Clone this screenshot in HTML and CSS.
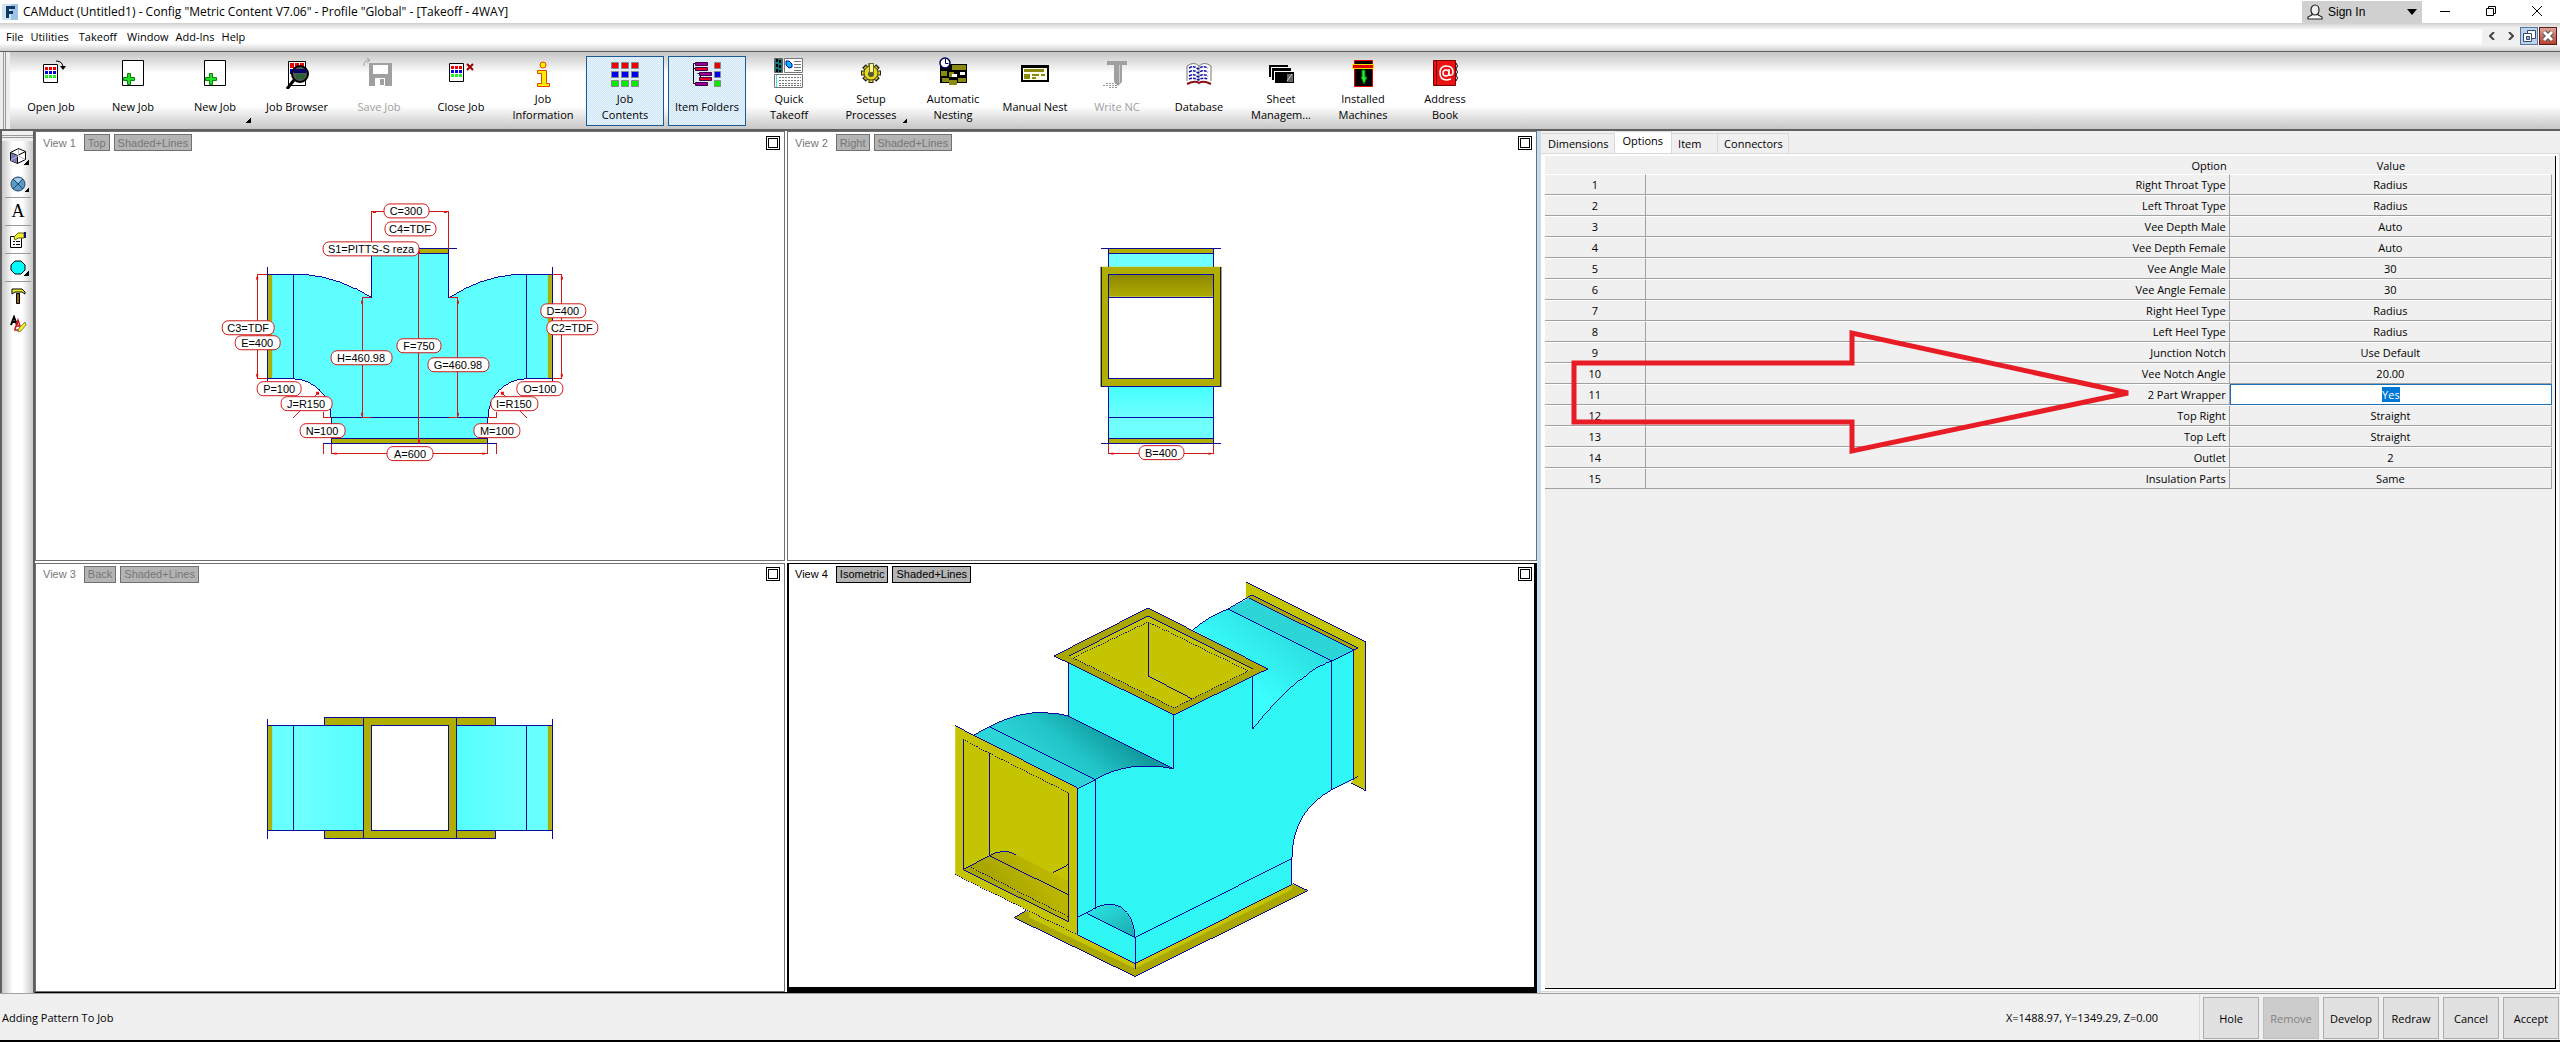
FILE: index.html
```html
<!DOCTYPE html>
<html lang="en">
<head>
    <meta charset="UTF-8">
    <meta name="viewport" content="width=device-width, initial-scale=1.0">
    <title>CAMduct (Untitled1) - Takeoff - 4WAY</title>
    <link rel="stylesheet" href="styles.css">
</head>
<body>
    <header class="title-bar">
        <svg class="app-icon" viewBox="0 0 16 16"><rect width="16" height="16" fill="#cfe3f3"/><path d="M9 0h7v16H9z" fill="#9cc4e4"/><path d="M4 2h9v3H7v2h4v3H7v4H4z" fill="#123a66"/></svg>
        <span class="title-text">CAMduct (Untitled1) - Config "Metric Content V7.06" - Profile "Global" - [Takeoff - 4WAY]</span>
        <button class="sign-in">
            <svg width="16" height="16" viewBox="0 0 16 16"><path d="M5 9v2L1 13v2h14v-2l-4-2V9" fill="#fff" stroke="#222" stroke-width="1.2"/><ellipse cx="8" cy="6" rx="4" ry="5" fill="#eee" stroke="#222" stroke-width="1.2"/></svg>
            <span>Sign In</span>
            <svg class="sign-arrow" width="10" height="6" viewBox="0 0 10 6"><path d="M0 0h10L5 6z"/></svg>
        </button>
        <div class="window-buttons">
            <button aria-label="Minimize"><svg width="10" height="10" viewBox="0 0 10 10"><path d="M0 5.500h10"/></svg></button>
            <button aria-label="Restore"><svg width="10" height="10" viewBox="0 0 10 10"><path d="M.5 2.500h7v7h-7zM2.500 2.500v-2h7v7h-2"/></svg></button>
            <button aria-label="Close"><svg width="10" height="10" viewBox="0 0 10 10"><path d="M0 0l10 10M10 0L0 10"/></svg></button>
        </div>
    </header>

    <nav class="menu-bar">
        <a href="#">File</a>
        <a href="#">Utilities</a>
        <a href="#" class="menu-wide">Takeoff</a>
        <a href="#" class="menu-wide">Window</a>
        <a href="#">Add-Ins</a>
        <a href="#">Help</a>
        <div class="mdi-buttons">
            <button class="mdi-scroll" aria-label="Previous"><svg width="6" height="8" viewBox="0 0 6 8"><path d="M5 0L1 4l4 4" fill="none" stroke="#444" stroke-width="2"/></svg></button>
            <button class="mdi-scroll" aria-label="Next"><svg width="6" height="8" viewBox="0 0 6 8"><path d="M1 0l4 4-4 4" fill="none" stroke="#444" stroke-width="2"/></svg></button>
            <button class="mdi-restore" aria-label="Restore document"><svg width="14" height="14" viewBox="0 0 14 14"><path d="M5.500 1.500h8v8h-8z" fill="#fff" stroke="#34486a"/><path d="M1.500 4.500h8v8h-8z" fill="#fff" stroke="#34486a"/><path d="M4.500 7.500h3v3h-3z" fill="#9db9dd" stroke="#34486a"/></svg></button>
            <button class="mdi-close" aria-label="Close document"><svg width="14" height="14" viewBox="0 0 14 14"><path d="M3 3l8 8M11 3l-8 8" stroke="#555" stroke-width="5"/><path d="M3 3l8 8M11 3l-8 8" stroke="#fff" stroke-width="3"/></svg></button>
        </div>
    </nav>

    <div class="toolbar">
        <button class="tool">
            <svg class="tool-icon" viewBox="0 0 32 32"><path d="M8.500 7.500h14v18h-14z" fill="#fff" stroke="#000"/><path d="M10 10h3v3h-3zM14 10h3v3h-3zM18 10h3v3h-3z" fill="#e00"/><path d="M10 14h3v3h-3zM14 14h3v3h-3zM18 14h3v3h-3z" fill="#00d"/><path d="M10 18h3v3h-3zM14 18h3v3h-3zM18 18h3v3h-3z" fill="#2e2"/><path d="M21 4q7 0 7 7" fill="none" stroke="#000"/><path d="M25 9h6l-3 4z"/></svg>
            <span>Open Job</span>
        </button>
        <button class="tool">
            <svg class="tool-icon" viewBox="0 0 32 32"><path d="M5.500 3.500h21v25h-21z" fill="#fff" stroke="#000"/><path d="M10.500 16.500h3v4h4v3h-4v4h-3v-4h-4v-3h4z" fill="#2d2" stroke="#080"/></svg>
            <span>New Job</span>
        </button>
        <button class="tool has-menu">
            <svg class="tool-icon" viewBox="0 0 32 32"><path d="M5.500 3.500h21v25h-21z" fill="#fff" stroke="#000"/><path d="M10.500 16.500h3v4h4v3h-4v4h-3v-4h-4v-3h4z" fill="#2d2" stroke="#080"/></svg>
            <span>New Job</span>
        </button>
        <button class="tool">
            <svg class="tool-icon" viewBox="0 0 32 32"><path d="M7.500 4.500h17v24h-17z" fill="#fff" stroke="#000"/><path d="M9 6h4v5H9zM14 6h4v5h-4zM19 6h4v5h-4z" fill="#e00"/><path d="M9 12h5v5H9z" fill="#00d"/><circle cx="19" cy="17" r="8" fill="#555" stroke="#000" stroke-width="2"/><path d="M13 12h12v4H13z" fill="#006"/><path d="M15 17h4v5h-4zM20 17h4v5h-4z" fill="#263"/><path d="M13 23l-7 9" stroke="#000" stroke-width="3"/></svg>
            <span>Job Browser</span>
        </button>
        <button class="tool" disabled>
            <svg class="tool-icon" viewBox="0 0 32 32"><path d="M6 6h23v23H6z" fill="#a0a0a0"/><path d="M10 8h15v9H10zM12 21h10v8H12z" fill="#fff"/><path d="M17 22h4v6h-4z" fill="#a0a0a0"/><path d="M1 9q0-6 5-6M4 1l3 2-3 3" fill="none" stroke="#a0a0a0"/></svg>
            <span>Save Job</span>
        </button>
        <button class="tool">
            <svg class="tool-icon" viewBox="0 0 32 32"><path d="M4.500 6.500h14v18h-14z" fill="#fff" stroke="#000"/><path d="M6 9h3v3H6zM10 9h3v3h-3zM14 9h3v3h-3z" fill="#e00"/><path d="M6 13h3v3H6zM10 13h3v3h-3zM14 13h3v3h-3z" fill="#00d"/><path d="M6 17h3v3H6zM10 17h3v3h-3zM14 17h3v3h-3z" fill="#2e2"/><path d="M22 7l6 6M28 7l-6 6" stroke="#900" stroke-width="2"/></svg>
            <span>Close Job</span>
        </button>
        <button class="tool">
            <svg class="tool-icon" viewBox="0 0 32 32"><circle cx="16" cy="8" r="3" fill="#fe0" stroke="#d40"/><path d="M10.500 13.500h9v13h3v3h-12v-3h4v-10h-4z" fill="#fe0" stroke="#d40"/></svg>
            <span>Job<br>Information</span>
        </button>
        <button class="tool selected">
            <svg class="tool-icon" viewBox="0 0 32 32" stroke="#888"><path d="M2.500 5.500h7v6h-7zM12.500 5.500h7v6h-7zM22.500 5.500h7v6h-7z" fill="#e00"/><path d="M2.500 14.500h7v6h-7zM12.500 14.500h7v6h-7zM22.500 14.500h7v6h-7z" fill="#00e"/><path d="M2.500 23.500h7v6h-7zM12.500 23.500h7v6h-7zM22.500 23.500h7v6h-7z" fill="#0e0"/></svg>
            <span>Job<br>Contents</span>
        </button>
        <button class="tool selected">
            <svg class="tool-icon" viewBox="0 0 32 32"><path d="M5.500 6.500h-3v20h3M2.500 11.500h3M6.500 16.500h3v5h3" fill="none" stroke="#000"/><g stroke="#404"><path d="M4.500 5.500h12v3h-12zM8.500 15.500h12v3h-12zM4.500 25.500h12v3h-12z" fill="#909"/><path d="M4.500 10.500h12v3h-12zM8.500 20.500h12v3h-12z" fill="#e02"/></g><g stroke="#888"><path d="M23.500 5.500h6v6h-6z" fill="#e00"/><path d="M23.500 14.500h6v6h-6z" fill="#00e"/><path d="M23.500 23.500h6v6h-6z" fill="#0e0"/></g></svg>
            <span>Item Folders</span>
        </button>
        <button class="tool">
            <svg class="tool-icon" viewBox="0 0 32 32"><path d="M1.500 1.500h8v14h-8z" fill="#177" stroke="#666"/><path d="M4 2v13M7 3v12" stroke="#000" stroke-width="2" stroke-dasharray="3 2"/><path d="M11.500 1.500h18v14h-18z" fill="#fff" stroke="#777"/><path d="M13 4h3l3 3v3l-3 1-3-3z" fill="#0bf" stroke="#00a"/><path d="M21 4.500h7M21 7.500h7M21 10.500h7M21 13.500h7" stroke="#777"/><path d="M1.500 17.500h28v13h-28z" fill="#fff" stroke="#777"/><path d="M6 20.500h22M6 23.500h22M6 26.500h22M6 28.500h22" stroke="#777" stroke-dasharray="2 1"/><path d="M3.500 18v12" stroke="#4dd"/></svg>
            <span>Quick<br>Takeoff</span>
        </button>
        <button class="tool has-menu">
            <svg class="tool-icon" viewBox="0 0 32 32"><path d="M16 6v20M6 16h20M9 9l14 14M23 9L9 23" stroke="#221" stroke-width="5"/><path d="M16 7v18M7 16h18M10 10l12 12M22 10L10 22" stroke="#e8d820" stroke-width="3"/><circle cx="16" cy="16" r="7" fill="#e8d820" stroke="#442"/><circle cx="16" cy="17" r="3" fill="#553"/><path d="M14.500 6.500h4v9h-4z" fill="#fff890" stroke="#663"/></svg>
            <span>Setup<br>Processes</span>
        </button>
        <button class="tool">
            <svg class="tool-icon" viewBox="0 0 32 32"><path d="M3 7h27v19H3z"/><path d="M15 8h14v5H15zM4 14h6v5H4zM12 15h5v5h-5zM5 21h7v4H5zM21 21h8v4h-8zM12 23h8v5h-8z" fill="#8a8a10"/><path d="M15 17h5v3h-5zM23 15h5v3h-5z" fill="#fff"/><circle cx="8" cy="6" r="5" fill="#fff" stroke="#005" stroke-width="1.500"/><path d="M8.500 2v4.500h3" fill="none" stroke="#005"/></svg>
            <span>Automatic<br>Nesting</span>
        </button>
        <button class="tool">
            <svg class="tool-icon" viewBox="0 0 32 32"><path d="M2 8h28v17H2z"/><path d="M4 11h24v12H4z" fill="#ffe"/><path d="M5 12h20v3H5zM5 17h6v5H5zM13 17h7v2h-7zM13 20h4v2h-4zM22 17h4v2h-4z" fill="#8a8a10"/></svg>
            <span>Manual Nest</span>
        </button>
        <button class="tool" disabled>
            <svg class="tool-icon" viewBox="0 0 32 32"><path d="M6 4h20v4h-5v17l-4 4-4-4V8H6z" fill="#a0a0a0"/><path d="M18.500 8v18" stroke="#ccc"/><path d="M2 28.500h15M5 26.500h10M8 30.500h9" stroke="#999" stroke-dasharray="2 1"/></svg>
            <span>Write NC</span>
        </button>
        <button class="tool">
            <svg class="tool-icon" viewBox="0 0 32 32" fill="none"><path d="M4 24V9q7-5 12 0 5-5 12 0v15M16 9v15" stroke="#777" fill="#fff"/><g fill="none"><path d="M6 11q5-3 9 1 5-4 10-1M6 15q5-3 9 1 5-4 10-1M6 19q5-3 9 1 5-4 10-1M6 22q5-2 9 1 5-3 10-1" stroke="#11a" stroke-dasharray="3 1" stroke-width="1.500"/><path d="M4 27q8-4 12-1 4-3 12 1" stroke="#811" stroke-width="2"/></g></svg>
            <span>Database</span>
        </button>
        <button class="tool">
            <svg class="tool-icon" viewBox="0 0 32 32"><path d="M4 8h19v12H4z"/><path d="M6 10h20v12H6z" fill="#fff"/><path d="M7 11h19v12H7z"/><path d="M9 14h20v12H9z" fill="#fff"/><path d="M10 15h19v11H10z"/><path d="M21.500 16.500h7v9h-7z" fill="#666" stroke="#000"/><path d="M22 24l5-7" stroke="#ccc"/></svg>
            <span>Sheet<br>Managem...</span>
        </button>
        <button class="tool">
            <svg class="tool-icon" viewBox="0 0 32 32"><path d="M7.500 3.500h18v26h-18z" stroke="#d00"/><path d="M5.500 7.500h21v4h-21z" fill="#d00" stroke="#fd0"/><path d="M15 13h3v7h2l-3 7-3-7h1z" fill="#2e3" stroke="#171"/></svg>
            <span>Installed<br>Machines</span>
        </button>
        <button class="tool">
            <svg class="tool-icon" viewBox="0 0 32 32"><path d="M4.500 3.500h22v25h-22z" fill="#e11" stroke="#700"/><path d="M7.500 4v24" stroke="#600"/><path d="M27 6q3 3 0 6 3 3 0 6 3 3 0 6" fill="none" stroke="#000"/><circle cx="17" cy="16" r="3" fill="none" stroke="#fff" stroke-width="1.500"/><path d="M20 12v6q4 1 4-3 0-6-7-6-6 0-6 7t7 7l4-1" fill="none" stroke="#fff" stroke-width="1.500"/></svg>
            <span>Address<br>Book</span>
        </button>
    </div>

    <main class="workspace">
        <aside class="side-tools">
            <button class="side-tool has-menu" aria-label="View direction"><svg width="18" height="18" viewBox="0 0 18 18"><path d="M1.500 5.500l8-4 7 3v8l-8 4-7-3z" fill="#fff" stroke="#000"/><path d="M2 6l6 3v7l-6-3z" fill="#77b"/><path d="M1.500 5.500l7 3 8-4M8.500 8.500v8" fill="none" stroke="#000"/><path d="M9.500 2v7l6 3M9 9l-7 4" fill="none" stroke="#bbb"/></svg></button>
            <button class="side-tool has-menu ruled" aria-label="Shading"><svg width="18" height="18" viewBox="0 0 18 18"><circle cx="9" cy="9" r="7" fill="#5b9bc8" stroke="#246"/><path d="M4 4l10 10M14 4L4 14" fill="none" stroke="#1d4a70"/><path d="M5 4q4-2 8 0l-4 4z" fill="#a8d0ea"/></svg></button>
            <button class="side-tool ruled letter">A</button>
            <button class="side-tool ruled" aria-label="Properties"><svg width="18" height="18" viewBox="0 0 18 18"><path d="M1.500 5.500h11v11h-11z" fill="#fff" stroke="#000"/><path d="M4 10.500h2M7 10.500h4M4 13.500h2M7 13.500h4" stroke="#000"/><path d="M5 6l4-4h6v5H9l-3 2z" fill="#ee3" stroke="#660"/><path d="M15 1h2v6h-2z" fill="#117"/></svg></button>
            <button class="side-tool has-menu ruled" aria-label="Shape"><svg width="18" height="18" viewBox="0 0 18 18"><path d="M6 2h6l4 4v5l-4 4H6l-4-4V6z" fill="#0ff" stroke="#000"/></svg></button>
            <button class="side-tool" aria-label="Build"><svg width="18" height="18" viewBox="0 0 18 18"><path d="M3 2h10l3 3v2l-3-2H6L3 7z" fill="#ee2" stroke="#000"/><path d="M7.500 6.500h3v10h-3z" fill="#960" stroke="#000"/></svg></button>
            <button class="side-tool" aria-label="Edit text"><svg width="18" height="18" viewBox="0 0 18 18"><path d="M2 10l3-8 3 8M3 7h4" fill="none" stroke="#000" stroke-width="2"/><path d="M6 14l3-9 3 9M7 11h4M5 15h6" fill="none" stroke="#c11" stroke-width="1.500"/><path d="M10 13l6-6 1 3-5 6-3 1z" fill="#ee2" stroke="#884"/></svg></button>
        </aside>

        <section class="views">
            <div class="view">
                <div class="view-head">
                    <span>View 1</span><button>Top</button><button>Shaded+Lines</button>
                    <button class="maximize" aria-label="Maximize view 1"></button>
                </div>
                <svg class="drawing" viewBox="36 132 748 428">
                    <path class="cyan" d="M267 275H308Q340 278 371 298V249H449V298Q480 278 512 275H553V379H527A39 39 0 0 0 488 418V444H331V418A39 39 0 0 0 292 379H267z"/>
                    <path class="olive" d="M371 249h78v5h-78zM331 439h157v5H331zM268 275h4v104h-4zM548 275h4v104h-4z"/>
                    <path class="edge" d="M371 298V249H457M449 249V298M371 254H449M267 267V381M553 267V381M267 275H308Q340 278 371 298M449 298Q480 278 512 275H553M293 275V379M527 275V379M267 379H292A39 39 0 0 1 331 418V444M553 379H527A39 39 0 0 0 488 418V444M331 418H488M331 439H488M323 444H497"/>
                    <path class="dim" d="M371 254V212H449V249M419 249V444M371 298H362V418H371M449 298H458V418H449M553 275H562V379H553M267 275H257V379H267M331 418H323V412M488 418H497V412M323 454V444M497 454V444M331 444V454H488V444M293 418L319 392M527 418L501 392"/>
                    <path class="tick" d="M256 277h2v3h-2zM256 374h2v3h-2zM561 277h2v3h-2zM561 374h2v3h-2zM361 301h2v3h-2zM361 413h2v3h-2zM457 301h2v3h-2zM457 413h2v3h-2zM418 251h2v3h-2zM418 440h2v3h-2zM373 211h3v2h-3zM444 211h3v2h-3zM334 453h3v2h-3zM482 453h3v2h-3zM316 392h3v3h-3zM501 392h3v3h-3z"/>
                    <g class="label">
                        <rect x="384" y="204" width="45" height="14" rx="6"/><text x="406" y="215">C=300</text>
                        <rect x="385" y="222" width="51" height="14" rx="6"/><text x="410" y="233">C4=TDF</text>
                        <rect x="323" y="242" width="96" height="14" rx="6"/><text x="371" y="253">S1=PITTS-S reza</text>
                        <rect x="541" y="304" width="45" height="14" rx="6"/><text x="563" y="315">D=400</text>
                        <rect x="547" y="321" width="51" height="14" rx="6"/><text x="572" y="332">C2=TDF</text>
                        <rect x="222" y="321" width="52" height="14" rx="6"/><text x="248" y="332">C3=TDF</text>
                        <rect x="235" y="336" width="45" height="14" rx="6"/><text x="257" y="347">E=400</text>
                        <rect x="397" y="339" width="44" height="14" rx="6"/><text x="419" y="350">F=750</text>
                        <rect x="331" y="351" width="61" height="14" rx="6"/><text x="361" y="362">H=460.98</text>
                        <rect x="428" y="358" width="61" height="14" rx="6"/><text x="458" y="369">G=460.98</text>
                        <rect x="257" y="382" width="44" height="14" rx="6"/><text x="279" y="393">P=100</text>
                        <rect x="517" y="382" width="46" height="14" rx="6"/><text x="540" y="393">O=100</text>
                        <rect x="281" y="397" width="51" height="14" rx="6"/><text x="306" y="408">J=R150</text>
                        <rect x="491" y="397" width="47" height="14" rx="6"/><text x="514" y="408">I=R150</text>
                        <rect x="300" y="424" width="45" height="14" rx="6"/><text x="322" y="435">N=100</text>
                        <rect x="474" y="424" width="46" height="14" rx="6"/><text x="497" y="435">M=100</text>
                        <rect x="387" y="447" width="46" height="14" rx="6"/><text x="410" y="458">A=600</text>
                    </g>
                </svg>
            </div>

            <div class="view">
                <div class="view-head">
                    <span>View 2</span><button>Right</button><button>Shaded+Lines</button>
                    <button class="maximize" aria-label="Maximize view 2"></button>
                </div>
                <svg class="drawing" viewBox="788 132 748 428">
                    <defs>
                        <linearGradient id="throat" x1="0" y1="0" x2="0" y2="1"><stop offset="0" stop-color="#8c8700"/><stop offset="1" stop-color="#b0ac00"/></linearGradient>
                        <linearGradient id="skirt" x1="0" y1="0" x2="0" y2="1"><stop offset="0" stop-color="#45feff"/><stop offset="1" stop-color="#70ffff"/></linearGradient>
                    </defs>
                    <path fill="#70ffff" d="M1108 254h106v13h-106zM1108 418h106v21h-106z"/>
                    <path fill="url(#skirt)" d="M1108 387h106v31h-106z"/>
                    <path class="olive" d="M1108 249h106v5h-106zM1108 439h106v5h-106z"/>
                    <path class="olive" fill-rule="evenodd" d="M1100 267h122v120h-122zM1108 275v104h106V275z"/>
                    <path fill="url(#throat)" d="M1108 275h106v22h-106z"/>
                    <path class="edge" d="M1101 249H1221M1108 249V267M1214 249V267M1108 254H1214M1101 267V387H1221V267M1108 275H1214V379H1108zM1108 298H1214M1108 387V444M1214 387V444M1108 418H1214M1108 439H1214M1101 444H1221"/>
                    <path class="dim" d="M1108 444V454H1214V444"/>
                    <path class="tick" d="M1111 453h3v2h-3zM1208 453h3v2h-3z"/>
                    <g class="label"><rect x="1139" y="446" width="45" height="14" rx="6"/><text x="1161" y="457">B=400</text></g>
                </svg>
            </div>

            <div class="view">
                <div class="view-head">
                    <span>View 3</span><button>Back</button><button>Shaded+Lines</button>
                    <button class="maximize" aria-label="Maximize view 3"></button>
                </div>
                <svg class="drawing" viewBox="36 562 748 428">
                    <defs>
                        <linearGradient id="sideL"><stop offset="0" stop-color="#70ffff"/><stop offset="1" stop-color="#55ffff"/></linearGradient>
                        <linearGradient id="sideR"><stop offset="0" stop-color="#55ffff"/><stop offset="1" stop-color="#70ffff"/></linearGradient>
                    </defs>
                    <path fill="#68ffff" d="M267 724h26v105h-26zM527 724h26v105h-26z"/>
                    <path fill="url(#sideL)" d="M293 724h70v105h-70z"/>
                    <path fill="url(#sideR)" d="M457 724h70v105h-70z"/>
                    <path class="olive" d="M268 724h4v105h-4zM548 724h4v105h-4zM324 716h39v8h-39zM457 716h39v8h-39zM324 829h39v8h-39zM457 829h39v8h-39z"/>
                    <path class="olive" fill-rule="evenodd" d="M363 716h94v121h-94zM371 724v105h78V724z"/>
                    <path class="edge" d="M267 717V837M553 717V837M267 724H363M457 724H553M267 829H363M457 829H553M293 724V829M527 724V829M363 716V837M457 716V837M324 724V716H496V724M324 829V837H496V829M371 724H449V829H371z"/>
                </svg>
            </div>

            <div class="view active">
                <div class="view-head">
                    <span>View 4</span><button>Isometric</button><button>Shaded+Lines</button>
                    <button class="maximize" aria-label="Maximize view 4"></button>
                </div>
                <svg class="drawing" viewBox="788 562 748 428">
                    <defs>
                        <linearGradient id="shoulder" gradientUnits="userSpaceOnUse" x1="1035" y1="770" x2="1085" y2="708"><stop offset="0" stop-color="#2dd7da"/><stop offset=".5" stop-color="#22c5c9"/><stop offset="1" stop-color="#109b9e"/></linearGradient>
                        <linearGradient id="rear" gradientUnits="userSpaceOnUse" x1="1285" y1="625" x2="1240" y2="680"><stop offset="0" stop-color="#2bdfe0"/><stop offset="1" stop-color="#3bffff"/></linearGradient>
                        <linearGradient id="heel" gradientUnits="userSpaceOnUse" x1="1000" y1="885" x2="1045" y2="850"><stop offset="0" stop-color="#aaa600"/><stop offset="1" stop-color="#c0bc00"/></linearGradient>
                        <linearGradient id="cheek" x1="0" y1="0" x2="1" y2="1"><stop offset="0" stop-color="#2de8e8"/><stop offset="1" stop-color="#1aa8ac"/></linearGradient>
                    </defs>

                    <!-- rear flange and branch -->
                    <path class="bright" d="M1246 580L1366 640V789L1351 781L1354 778V648L1246 596z"/>
                    <path class="dark" d="M1252 593L1358 646L1354 648L1249 596z"/>
                    <path fill="url(#rear)" d="M1193 628Q1206 616 1228 607L1332 659Q1311 665 1277 699Q1264 713 1253 727V660z"/>
                    <path fill="#2dd5d8" d="M1228 607L1249 596L1354 648L1332 659z"/>

                    <!-- bottom flange -->
                    <path class="dark" d="M1014 916L1026 909L1135 962L1292 882L1308 889L1135 975z"/>
                    <path class="bright" d="M1029 909V916L1135 967L1292 888V882L1135 962L1077 932z"/>

                    <!-- body -->
                    <path class="face" d="M1068 660L1174 713L1253 674V727Q1264 713 1277 699Q1311 665 1332 659L1354 648V778L1332 788Q1292 810 1292 858V883L1135 962L1077 933V787L1095 778Q1128 758 1174 767L1068 714z"/>
                    <path fill="url(#shoulder)" d="M974 733L989 725Q1019 709 1045 711Q1058 711 1068 714L1174 767Q1128 758 1095 778L1077 787z"/>
                    <path fill="#2dd5d8" d="M974 733L989 725L1095 778L1077 787z"/>
                    <path fill="url(#cheek)" d="M1087 912Q1100 903 1111 903Q1131 905 1135 936z"/>

                    <!-- left opening -->
                    <path class="bright" d="M955 724L1077 786V933L955 873z"/>
                    <path fill="url(#heel)" d="M963 868L989 854Q1003 846 1016 853L1068 879V920z"/>

                    <!-- top collar -->
                    <path class="dark" d="M1148 606L1268 667L1174 713L1054 654z"/>
                    <path class="bright" d="M1148 614L1253 667L1174 706L1069 654z"/>

                    <path class="edge" d="M1246 580L1366 640V789M1252 593L1358 646M1249 596L1354 648M1193 628Q1206 616 1228 607L1252 593M1228 607L1332 659V788M1354 648V778M1253 674V727Q1264 713 1277 699Q1311 665 1332 659L1358 646M1358 775L1332 788Q1292 810 1292 858V883L1135 962L1077 933M1351 781L1366 789"/>
                    <path class="edge" d="M1148 606L1268 667L1174 713L1054 654zM1148 614L1253 667M1069 654L1148 614M1148 620V674L1192 697M1068 661V714L1174 767V713"/>
                    <path class="edge dots" d="M1148 620L1248 669L1174 706L1073 656z"/>
                    <path class="edge" d="M974 733L989 725Q1019 709 1045 711Q1058 711 1068 714M989 725L1095 778V907M1077 787L1095 778Q1128 758 1174 767M955 724L1077 786V933M963 738V868L1068 920V791M989 751V854L1068 893M963 868L989 854Q1003 846 1016 853M1053 871L1068 863"/>
                    <path class="edge dots" d="M955 873L1077 933M963 738L1068 791M969 865L1068 915"/>
                    <path class="edge" d="M1077 916L1098 905Q1111 900 1122 906Q1134 915 1135 936V967M1087 912L1135 936L1292 857M1026 909L1014 916L1135 975L1308 889L1293 882"/>
                </svg>
            </div>
        </section>

        <section class="panel">
            <div class="tabs" role="tablist">
                <button role="tab">Dimensions</button>
                <button role="tab" class="current" aria-selected="true">Options</button>
                <button role="tab" class="tab-item">Item</button>
                <button role="tab">Connectors</button>
            </div>
            <div class="panel-body">
                <div class="sheet">
                    <table>
                        <colgroup><col class="col-no"><col class="col-option"><col class="col-value"></colgroup>
                        <thead><tr><th></th><th class="option">Option</th><th>Value</th></tr></thead>
                        <tbody>
                            <tr><td>1</td><td class="option">Right Throat Type</td><td>Radius</td></tr>
                            <tr><td>2</td><td class="option">Left Throat Type</td><td>Radius</td></tr>
                            <tr><td>3</td><td class="option">Vee Depth Male</td><td>Auto</td></tr>
                            <tr><td>4</td><td class="option">Vee Depth Female</td><td>Auto</td></tr>
                            <tr><td>5</td><td class="option">Vee Angle Male</td><td>30</td></tr>
                            <tr><td>6</td><td class="option">Vee Angle Female</td><td>30</td></tr>
                            <tr><td>7</td><td class="option">Right Heel Type</td><td>Radius</td></tr>
                            <tr><td>8</td><td class="option">Left Heel Type</td><td>Radius</td></tr>
                            <tr><td>9</td><td class="option">Junction Notch</td><td>Use Default</td></tr>
                            <tr><td>10</td><td class="option">Vee Notch Angle</td><td>20.00</td></tr>
                            <tr><td>11</td><td class="option"><label for="wrapper">2 Part Wrapper</label></td><td class="editing"><input id="wrapper" type="text" value="Yes"></td></tr>
                            <tr><td>12</td><td class="option">Top Right</td><td>Straight</td></tr>
                            <tr><td>13</td><td class="option">Top Left</td><td>Straight</td></tr>
                            <tr><td>14</td><td class="option">Outlet</td><td>2</td></tr>
                            <tr><td>15</td><td class="option">Insulation Parts</td><td>Same</td></tr>
                        </tbody>
                    </table>
                    <svg class="arrow" viewBox="0 0 564 126"><path d="M4 34H282V4L558 64L282 122V93H4z"/></svg>
                </div>
            </div>
        </section>
    </main>

    <footer class="status-bar">
        <span>Adding Pattern To Job</span>
        <span class="coords">X=1488.97, Y=1349.29, Z=0.00</span>
        <div class="actions">
            <button>Hole</button>
            <button disabled>Remove</button>
            <button>Develop</button>
            <button>Redraw</button>
            <button>Cancel</button>
            <button>Accept</button>
        </div>
    </footer>

    <script>
        // the edited cell opens with its whole value selected
        const wrapper = document.getElementById('wrapper');
        wrapper.focus();
        wrapper.select();
    </script>
</body>
</html>
```
FILE: styles.css
```css
* {
    box-sizing: border-box;
}

body {
    margin: 0;
    height: 100vh;
    display: flex;
    flex-direction: column;
    font-family: "Open Sans", "Noto Sans", sans-serif;
    font-size: 11px;
    color: #000;
    background: #f0f0f0;
    overflow: hidden;
}

button {
    font: inherit;
    color: inherit;
    border: 0;
    padding: 0;
    background: none;
}

/* Title bar */
.title-bar {
    display: flex;
    align-items: center;
    height: 23px;
    background: #fff;
}

.app-icon {
    width: 16px;
    height: 16px;
    margin: 0 5px 0 2px;
}

.title-text {
    flex: 1;
    font-size: 12px;
}

.sign-in {
    display: flex;
    align-items: center;
    gap: 5px;
    width: 120px;
    height: 22px;
    margin-top: 1px;
    padding: 0 5px;
    background: #d0d0d0;
    font: 12px "Liberation Sans", Arial, sans-serif;
}

.sign-arrow {
    margin-left: auto;
}

.window-buttons {
    display: flex;
}

.window-buttons button {
    width: 46px;
    height: 22px;
}

.window-buttons svg {
    fill: none;
    stroke: #000;
}

/* Menu bar */
.menu-bar {
    display: flex;
    align-items: center;
    gap: 7px;
    height: 28px;
    padding: 0 3px 2px 6px;
    background: linear-gradient(#cfcfcf, #fff 26%, #fff 72%, #cfcfcf);
}

.menu-bar a {
    color: #000;
    text-decoration: none;
}

.menu-wide {
    margin-left: 3px;
}

.mdi-buttons {
    display: flex;
    align-items: center;
    margin-left: auto;
}

.mdi-buttons button {
    display: flex;
    align-items: center;
    justify-content: center;
    height: 18px;
}

.mdi-scroll {
    width: 19px;
    background: #f0f0f0;
}

.mdi-buttons .mdi-restore {
    width: 18px;
    border: 1px solid #5c7499;
    background: #bcd3ee;
}

.mdi-buttons .mdi-close {
    width: 18px;
    margin-left: 1px;
    border: 1px solid #5a1a1a;
    background: linear-gradient(#e0a49a, #b8402c);
}

/* Toolbar */
.toolbar {
    display: flex;
    gap: 4px;
    height: 80px;
    padding: 4px 12px;
    border-top: 1px solid #606060;
    border-bottom: 2px solid #606060;
    background:
        linear-gradient(90deg, #eee 3px, #999 3px, #999 4px, #eee 4px, #eee 5px, #999 5px, #999 6px, #eee 6px) left / 10px 100% no-repeat,
        linear-gradient(#c6c6c6, #fff 28%, #fff 70%, #c6c6c6);
}

.tool {
    position: relative;
    display: flex;
    flex-direction: column;
    align-items: center;
    width: 78px;
    height: 70px;
    border: 1px solid transparent;
    line-height: 16px;
    text-align: center;
}

.tool-icon {
    width: 32px;
    height: 32px;
    fill: #000;
    flex: none;
}

.tool span {
    display: flex;
    flex-direction: column;
    justify-content: center;
    height: 36px;
}

.tool span:has(br) {
    display: block;
    padding-top: 2px;
}

.tool:disabled {
    color: #a0a0a0;
}

.tool.selected {
    border-color: #1c5a96;
    background: repeating-conic-gradient(#cde6f7 0 25%, #e9f4fc 0 50%) 0 0 / 2px 2px;
}

.has-menu::after {
    content: "";
    position: absolute;
    right: 2px;
    bottom: 2px;
    width: 5px;
    height: 5px;
    background: linear-gradient(135deg, transparent 50%, #000 50%);
}

/* Workspace */
.workspace {
    flex: 1;
    min-height: 0;
    display: grid;
    grid-template-columns: 35px minmax(0, 1502fr) 4px minmax(0, 1019fr);
}

.side-tools {
    display: flex;
    flex-direction: column;
    padding: 11px 0 0 3px;
    border-left: 2px solid #606060;
    border-right: 2px solid #606060;
    background:
        linear-gradient(#f0f0f0 4px, #999 4px, #999 5px, #f0f0f0 5px, #f0f0f0 6px, #999 6px, #999 7px, #f0f0f0 7px) top / 100% 10px no-repeat,
        linear-gradient(90deg, #c8c8c8, #fff 35%, #fff 65%, #c8c8c8);
}

.side-tool {
    position: relative;
    display: flex;
    align-items: center;
    justify-content: center;
    width: 26px;
    height: 28px;
}

.side-tool.ruled {
    border-bottom: 1px solid #999;
}

.letter {
    font: 18px "Liberation Serif", serif;
}

.side-tool.has-menu::after {
    bottom: 5px;
}

/* Views */
.views {
    display: grid;
    grid-template: 1fr 1fr / 1fr 1fr;
    gap: 2px;
    min-height: 0;
    border-bottom: 1px solid #000;
    background: #fff;
}

.view {
    position: relative;
    min-height: 0;
    border: 1px solid #707070;
    background: #fff;
    font: 11px "Liberation Sans", Arial, sans-serif;
    color: #777;
}

.view-head {
    position: absolute;
    top: 2px;
    left: 7px;
    right: 4px;
    display: flex;
    align-items: center;
    gap: 4px;
}

.view-head span {
    margin-right: 4px;
}

.view-head button {
    height: 17px;
    padding: 0 3px;
    border: 1px solid #707070;
    background: #b4b4b4;
}

.view-head .maximize {
    width: 14px;
    height: 14px;
    margin-left: auto;
    border: 1px solid #000;
    background: #fff;
    box-shadow: inset 0 0 0 1px #fff, inset 0 0 0 2px #000;
}

.view.active {
    border-color: #000;
    box-shadow: inset -2px 0 #000, inset 1px 0 #000, inset 0 -4px #000;
    color: #000;
}

.active .view-head button {
    border-color: #000;
}

.drawing {
    display: block;
    width: 100%;
    height: 100%;
}

.cyan {
    fill: #60ffff;
}

.olive {
    fill: #b0ae00;
}

.bright {
    fill: #c5c400;
}

.dark {
    fill: #aaa800;
}

.face {
    fill: #30f6f6;
}

.edge {
    fill: none;
    stroke: #0a0a9a;
    shape-rendering: crispEdges;
}

.dots {
    stroke-dasharray: 1 1;
}

.dim {
    fill: none;
    stroke: #d01818;
    shape-rendering: crispEdges;
}

.tick {
    fill: #e01010;
}

.label rect {
    fill: #fff;
    stroke: #d01818;
}

.label text {
    fill: #000;
    text-anchor: middle;
}

/* Options panel */
.panel {
    grid-column: 4;
    display: flex;
    flex-direction: column;
    min-height: 0;
    padding-bottom: 1px;
    box-shadow: -4px 0 #c4dcf0;
}

.tabs {
    display: flex;
    align-items: flex-end;
    height: 22px;
    padding-left: 1px;
}

.tabs button {
    height: 20px;
    padding: 0 5px 0 6px;
    border: 1px solid #d9d9d9;
    border-bottom: 0;
    border-left: 0;
    text-align: left;
}

.tabs .current {
    height: 22px;
    padding: 0 8px 4px;
    background: #fff;
}

.tabs .tab-item {
    width: 46px;
}

.panel-body {
    flex: 1;
    min-height: 0;
    padding: 2px 3px 2px 4px;
    border: 1px solid #d9d9d9;
    border-left: 0;
    background: #fff;
}

.sheet {
    position: relative;
    height: 100%;
    padding-right: 3px;
    border-right: 1px solid #000;
    border-bottom: 1px solid #000;
    background: #f0f0f0;
}

table {
    width: 100%;
    table-layout: fixed;
    border-collapse: separate;
    border-spacing: 0;
}

.col-no {
    width: 10%;
}

.col-option {
    width: 58%;
}

.col-value {
    width: 32%;
}

th,
td {
    height: 21px;
    padding: 0;
    border-top: 1px solid #fff;
    border-bottom: 1px solid #a0a0a0;
    border-right: 1px solid #a0a0a0;
    font-weight: normal;
    text-align: center;
}

th {
    height: 18px;
    border: 0;
}

.option {
    padding-right: 3px;
    text-align: right;
}

.editing {
    border: 0;
}

.editing input {
    display: block;
    width: 100%;
    height: 21px;
    padding: 0;
    border: 1px solid #1c6fb4;
    outline: 0;
    background: #fff;
    font: inherit;
    text-align: center;
}

.editing input::selection {
    background: #0078d7;
    color: #fff;
}

/* callout over the table */
.arrow {
    position: absolute;
    top: 173px;
    left: 25px;
    width: 564px;
    height: 126px;
    fill: none;
    stroke: #e81c24;
    stroke-width: 5;
    pointer-events: none;
}

/* Status bar */
.status-bar {
    display: flex;
    align-items: center;
    height: 49px;
    padding-left: 2px;
    border-top: 1px solid #a0a0a0;
    border-bottom: 2px solid #000;
}

.coords {
    margin-left: auto;
    margin-right: 41px;
}

.actions {
    display: flex;
    gap: 4px;
    padding: 3px 1px 1px 3px;
    border-left: 1px solid #d9d9d9;
}

.actions button {
    width: 56px;
    height: 42px;
    border: 1px solid #adadad;
    background: #e1e1e1;
}

.actions button:disabled {
    border-color: #bfbfbf;
    background: #ccc;
    color: #838383;
}
```
